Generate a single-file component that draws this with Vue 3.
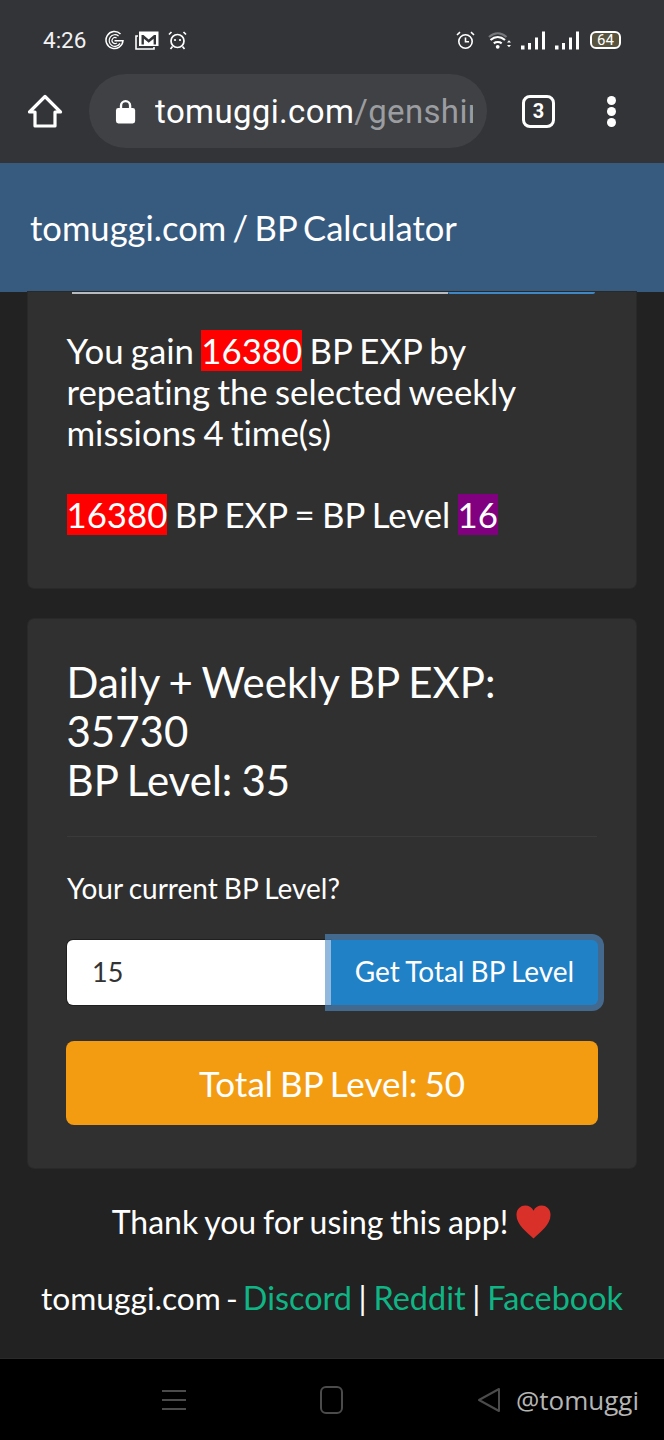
<template>
  <div class="page">
    <header class="chrome">
      <div class="status">
        <span class="time">4:26</span>
        <svg class="ic g-icon" width="19" height="20" viewBox="0 0 19 20" fill="none" stroke="#fff">
          <path d="M15.5 4A8.5 8.5 0 1 0 18 10.8H9.5" stroke-width="1.5" />
          <path d="M13.6 6A5.8 5.8 0 1 0 15 13.4" stroke-width="1.2" />
          <path d="M11.6 8A3 3 0 1 0 12 12.8" stroke-width="1.1" />
        </svg>
        <svg class="ic mail" width="24" height="19" viewBox="0 0 24 19" fill="none">
          <path d="M3 5H1V18H19V16" stroke="#fff" stroke-width="1.6" />
          <rect x="4" y="0.5" width="19.5" height="14.5" fill="#fff" />
          <path d="M6.5 13.5V4H8.5L13.7 8.5L19 4H21V13.5H18.6V7.8L13.7 11.8L8.9 7.8V13.5Z" fill="#333438" />
        </svg>
        <svg class="ic robot" width="19" height="19" viewBox="0 0 19 19" fill="none" stroke="#fff" stroke-width="1.7">
          <circle cx="9.5" cy="10" r="6.5" />
          <path d="M1 3.5L3.5 1M15.5 1L18 3.5M4.5 15.5L2.5 18M14.5 15.5L16.5 18" />
          <circle cx="7" cy="9" r="1.1" fill="#fff" stroke="none" />
          <circle cx="12" cy="9" r="1.1" fill="#fff" stroke="none" />
        </svg>
        <svg class="ic alarm" width="19" height="19" viewBox="0 0 19 19" fill="none" stroke="#fff" stroke-width="1.6">
          <circle cx="9.5" cy="10.5" r="6.7" />
          <path d="M9.5 6.5V10.7H13M1 4L4 1.2M15 1.2L18 4" />
        </svg>
        <svg class="ic wifi" width="24" height="19" viewBox="0 0 24 19" fill="none" stroke-width="2.2">
          <path d="M1 6C6.5 1 13 1 18.5 6" stroke="#77787b" />
          <path d="M2.5 9C7 5.2 12.5 5.2 17 9" stroke="#fff" />
          <path d="M5.8 12.4C8 10.8 11.5 10.8 13.7 12.4" stroke="#fff" />
          <circle cx="9.7" cy="15.8" r="1.9" fill="#fff" stroke="none" />
          <path d="M19 11.5L21 9.3L23 11.5ZM19 14L21 16.2L23 14Z" fill="#fff" stroke="none" />
        </svg>
        <svg class="ic signal" width="24" height="19" viewBox="0 0 24 19" fill="#fff">
          <rect x="0" y="14.5" width="3.5" height="4" />
          <rect x="7" y="12" width="3" height="6.5" />
          <rect x="14" y="6.5" width="3" height="12" />
          <rect x="21" y="0.5" width="3" height="18" />
        </svg>
        <svg class="ic signal second" width="24" height="19" viewBox="0 0 24 19" fill="#fff">
          <rect x="0" y="14.5" width="3.5" height="4" />
          <rect x="7" y="12" width="3" height="6.5" />
          <rect x="14" y="6.5" width="3" height="12" />
          <rect x="21" y="0.5" width="3" height="18" />
        </svg>
        <span class="battery">64</span>
      </div>
      <div class="toolbar">
        <svg class="home" width="36" height="36" viewBox="0 0 36 36" fill="none" stroke="#fff" stroke-width="3.2" stroke-linejoin="round">
          <path d="M2.5 19L18 3.5L33.5 19H28V33H8V19Z" />
        </svg>
        <div class="omnibox">
          <svg width="22" height="28" viewBox="0 0 22 28" fill="#fff">
            <path d="M5 13V8.5A6 6 0 0 1 17 8.5V13H14.5V8.5A3.5 3.5 0 0 0 7.5 8.5V13Z" />
            <rect x="1" y="11" width="20" height="16" rx="2.5" />
          </svg>
          <span class="url">tomuggi.com<span class="url-path">/genshin</span></span>
        </div>
        <div class="tabs">3</div>
        <div class="menu"><i></i><i></i><i></i></div>
      </div>
    </header>

    <div class="site-bar">tomuggi.com / BP Calculator</div>

    <main class="content">
      <section class="card card-top">
        <div class="cut-off"><span class="cut-input"></span><span class="cut-btn"></span></div>
        <p class="copy">
          You gain <mark class="red">16380</mark> BP EXP by<br />
          repeating the selected weekly<br />
          missions 4 time(s)<br /><br />
          <mark class="red">16380</mark> BP EXP = BP Level <mark class="purple">16</mark>
        </p>
      </section>

      <section class="card card-total">
        <h2>Daily + Weekly BP EXP:<br />35730<br />BP Level: 35</h2>
        <hr />
        <label for="level">Your current BP Level?</label>
        <div class="input-group">
          <input id="level" value="15" />
          <button type="button">Get Total BP Level</button>
        </div>
        <div class="total">Total BP Level: 50</div>
      </section>

      <p class="thanks">
        Thank you for using this app!
        <svg width="37" height="36" viewBox="0 0 38 36">
          <path d="M19 35C12 28 1.5 21 1.5 10.5C1.5 4.5 6 1 10.5 1C14.5 1 17.5 3 19 6.5C20.5 3 23.5 1 27.5 1C32 1 36.5 4.5 36.5 10.5C36.5 21 26 28 19 35Z" fill="#d9302a" />
        </svg>
      </p>
      <p class="links">
        <span class="site">tomuggi.com - </span><a>Discord</a> | <a>Reddit</a> | <a>Facebook</a>
      </p>
    </main>

    <footer class="nav">
      <svg class="nav-menu" width="24" height="22" viewBox="0 0 24 22" stroke="#4b4b4b" stroke-width="2">
        <path d="M0 2H24M0 11H24M0 20H24" />
      </svg>
      <span class="nav-square"></span>
      <svg class="nav-back" width="24" height="26" viewBox="0 0 24 26" fill="none" stroke="#4b4b4b" stroke-width="2" stroke-linejoin="round">
        <path d="M22 2V24L2 13Z" />
      </svg>
      <span class="watermark">@tomuggi</span>
    </footer>
  </div>
</template>

<script setup>
</script>

<style>
body {
  margin: 0;
  background: #222;
}
</style>

<style scoped>
.page {
  width: 664px;
  height: 1440px;
  display: flex;
  flex-direction: column;
  overflow: hidden;
  font-family: Lato, "Liberation Sans", sans-serif;
  font-variant-ligatures: none;
  color: #fff;
  background: #222;
}

.chrome {
  height: 163px;
  flex-shrink: 0;
  background: #333438;
  box-sizing: border-box;
  padding-top: 28px;
  font-family: Roboto, "Liberation Sans", sans-serif;
}

.status {
  height: 24px;
  display: flex;
  align-items: center;
  padding-left: 43px;
}

.ic {
  display: block;
  flex-shrink: 0;
}

.time {
  width: 62px;
  font-size: 22.5px;
  color: #f2f2f2;
}

.mail {
  margin-left: 11px;
}

.robot {
  margin-left: 9px;
}

.alarm {
  margin-left: 269px;
}

.wifi {
  margin-left: 13px;
}

.signal {
  margin-left: 9px;
}

.signal.second {
  margin-left: 10px;
}

.battery {
  width: 27px;
  height: 14px;
  margin-left: 11px;
  border: 2px solid #fff;
  border-radius: 6px;
  background: #59543e;
  font-size: 15px;
  line-height: 14px;
  text-align: center;
}

.toolbar {
  display: flex;
  align-items: center;
  margin-top: 22px;
  height: 74px;
}

.home {
  margin-left: 27px;
  flex-shrink: 0;
}

.omnibox {
  margin-left: 26px;
  width: 398px;
  height: 74px;
  box-sizing: border-box;
  border-radius: 37px;
  background: #3f4145;
  display: flex;
  align-items: center;
  gap: 19px;
  padding: 0 14px 0 26px;
  overflow: hidden;
  flex-shrink: 0;
}

.url {
  font-size: 33px;
  white-space: nowrap;
  overflow: hidden;
  letter-spacing: 0.35px;
}

.url-path {
  color: #9b9da1;
}

.tabs {
  margin-left: 35px;
  width: 27px;
  height: 27px;
  border: 3px solid #fff;
  border-radius: 8px;
  font-size: 20px;
  font-weight: 700;
  line-height: 27px;
  text-align: center;
}

.menu {
  margin-left: 52px;
  display: flex;
  flex-direction: column;
  gap: 2px;
}

.menu i {
  width: 9px;
  height: 9px;
  border-radius: 50%;
  background: #fff;
}

.site-bar {
  height: 129px;
  flex-shrink: 0;
  background: #375a7f;
  box-sizing: border-box;
  padding: 45px 30px 0;
  font-size: 34.6px;
  word-spacing: -2.5px;
  line-height: 40px;
}

.content {
  flex: 1;
  min-height: 0;
  display: flex;
  flex-direction: column;
  align-items: center;
}

.card {
  width: 608px;
  box-sizing: border-box;
  background: #303030;
  border-radius: 0 0 6px 6px;
  padding: 0 39px;
  box-shadow: 0 0 0 1px #292929;
}

.card-top {
  height: 296px;
}

.cut-off {
  display: flex;
  height: 2px;
  margin: 0 2px 0 5px;
}

.cut-input {
  width: 376px;
  background: #b9bcbf;
}

.cut-btn {
  flex: 1;
  background: #3f88c5;
  border-radius: 0 0 3px 3px;
}

.copy {
  margin: 36px 0 0 -0.5px;
  font-size: 34.8px;
  word-spacing: -1.6px;
  line-height: 41px;
}

mark {
  color: #fff;
  padding: 0;
}

.red {
  background: #f00;
}

.purple {
  background: #800080;
}

.card-total {
  margin-top: 31px;
  height: 549px;
  border-radius: 6px;
  padding-top: 39px;
}

h2 {
  margin: 0 0 0 -0.5px;
  font-size: 42px;
  font-weight: 400;
  word-spacing: -1.6px;
  line-height: 49px;
}

hr {
  margin: 31px 0 0;
  border: 0;
  height: 1px;
  background: #3a3a3a;
}

label {
  display: block;
  margin-top: 36px;
  font-size: 28px;
  word-spacing: -1px;
  line-height: 30px;
}

.input-group {
  display: flex;
  margin-top: 37px;
  height: 65px;
  width: 531px;
}

input {
  width: 264px;
  height: 65px;
  box-sizing: border-box;
  border: 0;
  border-radius: 6px 0 0 6px;
  padding: 0 25px 2px;
  background: #fff;
  color: #333;
  font-family: Lato, "Liberation Sans", sans-serif;
  font-size: 27px;
  outline: none;
  box-shadow: 0 0 0 1px #1f1f1f;
}

button {
  flex: 1;
  height: 65px;
  border: 0;
  border-radius: 0 6px 6px 0;
  background: #2081c7;
  color: #fff;
  font-family: Lato, "Liberation Sans", sans-serif;
  font-size: 28px;
  word-spacing: -1px;
  padding: 0 0 3px;
  box-shadow: 0 0 0 6px rgba(80, 140, 200, 0.62);
}

.total {
  margin: 36px 0 0 -1px;
  width: 532px;
  height: 84px;
  border-radius: 8px;
  background: #f39c12;
  font-size: 35px;
  word-spacing: -2px;
  line-height: 84px;
  text-align: center;
}

.thanks {
  margin: 32px 0 0;
  height: 44px;
  font-size: 32px;
  word-spacing: -1.4px;
  line-height: 44px;
  display: flex;
  align-items: center;
  gap: 7px;
  white-space: nowrap;
}

.links {
  margin: 32px 0 0;
  font-size: 32.4px;
  word-spacing: -1.5px;
  line-height: 44px;
  white-space: nowrap;
}

.site {
  font-size: 31.7px;
  word-spacing: -3px;
}

a {
  color: #10b585;
}

.nav {
  height: 82px;
  flex-shrink: 0;
  background: #000;
  display: flex;
  align-items: center;
  border-top: 1px solid #2a2a2a;
  box-sizing: border-box;
}

.nav-menu {
  margin-left: 162px;
}

.nav-square {
  margin-left: 134px;
  width: 19px;
  height: 24px;
  border: 2px solid #4b4b4b;
  border-radius: 6px;
}

.nav-back {
  margin-left: 134px;
}

.watermark {
  margin-left: 15px;
  font-size: 26px;
  color: #b5b5b5;
  font-family: "Open Sans", "Liberation Sans", sans-serif;
}
</style>
